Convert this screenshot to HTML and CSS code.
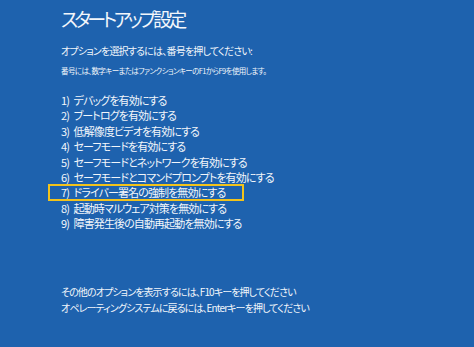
FILE: index.html
```html
<!DOCTYPE html>
<html lang="ja">
<head>
  <meta charset="UTF-8">
  <meta name="viewport" content="width=device-width, initial-scale=1.0">
  <title>スタートアップ設定</title>
  <link rel="stylesheet" href="styles.css">
</head>
<body>
  <div class="screen">
    <h1 class="title">スタートアップ設定</h1>
    <p class="prompt">オプションを選択するには、番号を押してください:</p>
    <p class="note">番号には、数字キーまたはファンクションキーのF1からF9を使用します。</p>

    <ul class="options">
      <li>1) デバッグを有効にする</li>
      <li>2) ブートログを有効にする</li>
      <li>3) 低解像度ビデオを有効にする</li>
      <li>4) セーフモードを有効にする</li>
      <li>5) セーフモードとネットワークを有効にする</li>
      <li>6) セーフモードとコマンドプロンプトを有効にする</li>
      <li class="selected">7) ドライバー署名の強制を無効にする</li>
      <li>8) 起動時マルウェア対策を無効にする</li>
      <li>9) 障害発生後の自動再起動を無効にする</li>
    </ul>

    <div class="footer">
      <p>その他のオプションを表示するには、F10キーを押してください</p>
      <p>オペレーティングシステムに戻るには、Enterキーを押してください</p>
    </div>
  </div>
</body>
</html>
```

FILE: styles.css
```css
body {
  margin: 0;
  background-color: #1e62ae;
  font-family: "Noto Sans CJK JP", "Noto Sans", sans-serif;
  font-feature-settings: "palt" 1;
  color: #f2f6fb;
}

.screen {
  height: 347px;
  padding: 0 0 0 61px;
  box-sizing: border-box;
  display: flex;
  flex-direction: column;
}

.title {
  margin: 7px 0 0;
  font-size: 19px;
  font-weight: normal;
  line-height: 24px;
  letter-spacing: -3.6px;
}

.prompt {
  margin: 13px 0 0;
  font-size: 10px;
  line-height: 14px;
  letter-spacing: -0.8px;
}

.note {
  margin: 8px 0 0;
  font-size: 7.5px;
  line-height: 10px;
  letter-spacing: -0.6px;
}

.options {
  list-style: none;
  margin: 17px 0 0;
  padding: 0;
  font-size: 11px;
  line-height: 15.4px;
  letter-spacing: -0.9px;
  word-spacing: 3px;
}

.options li {
  position: relative;
}

.selected::before {
  content: "";
  position: absolute;
  left: -13px;
  top: -1px;
  width: 192px;
  height: 13px;
  border: 2px solid #f2c31c;
}

.footer {
  margin-top: 52px;
  font-size: 10px;
  line-height: 16px;
  letter-spacing: -0.9px;
}

.footer p {
  margin: 0;
}
```
